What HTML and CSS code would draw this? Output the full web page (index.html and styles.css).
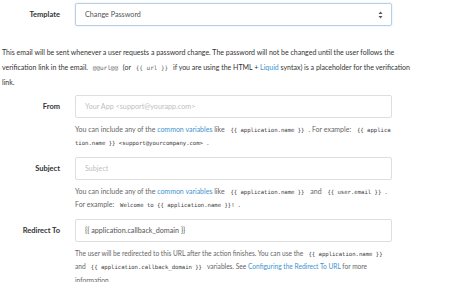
FILE: index.html
```html
<!DOCTYPE html>
<html>
<head>
<meta charset="utf-8">
<link rel="stylesheet" href="styles.css">
</head>
<body>
<div class="page">
  <div class="row row-template">
    <label class="label">Template</label>
    <div class="field">
      <div class="select">
        <span class="select-text">Change Password</span>
        <svg class="select-arrows" width="5" height="8" viewBox="0 0 5 8"><path d="M0.5 3 L2.5 0.5 L4.5 3 Z M0.5 5 L2.5 7.5 L4.5 5 Z" fill="#555"/></svg>
      </div>
    </div>
  </div>

  <p class="intro">This email will be sent whenever a user requests a password change. The password will not be changed until the user follows the verification link in the email. <code class="plain">@@url@@</code> (or <code class="plain">{{ url }}</code> if you are using the HTML + <a class="link">Liquid</a> syntax) is a placeholder for the verification link.</p>

  <div class="row row-from">
    <label class="label">From</label>
    <div class="field">
      <div class="input placeholder">Your App &lt;support@yourapp.com&gt;</div>
      <p class="help">You can include any of the <a class="link">common variables</a> like <code>{{ application.name }}</code>. For example: <code>{{ application.name }} &lt;support@yourcompany.com&gt;</code>.</p>
    </div>
  </div>

  <div class="row row-subject">
    <label class="label">Subject</label>
    <div class="field">
      <div class="input placeholder">Subject</div>
      <p class="help">You can include any of the <a class="link">common variables</a> like <code>{{ application.name }}</code> and <code>{{ user.email }}</code>. For example: <code>Welcome to {{ application.name }}!</code>.</p>
    </div>
  </div>

  <div class="row row-redirect">
    <label class="label">Redirect To</label>
    <div class="field">
      <div class="input value">{{ application.callback_domain }}</div>
      <p class="help help-compact">The user will be redirected to this URL after the action finishes. You can use the <code>{{ application.name }}</code> and <code>{{ application.callback_domain }}</code> variables. See <a class="link">Configuring the Redirect To URL</a> for more information.</p>
    </div>
  </div>
</div>
</body>
</html>
```

FILE: styles.css
```css
html, body {
  margin: 0;
  padding: 0;
  background: #ffffff;
}
body {
  font-family: "Lato", "Liberation Sans", sans-serif;
  color: #333;
  overflow: hidden;
}
.page {
  width: 432px;
  padding: 3px 0 0 2px;
}
.row {
  display: grid;
  grid-template-columns: 58px 317px;
  column-gap: 15px;
  align-items: start;
}
.label {
  text-align: right;
  font-size: 7.5px;
  font-weight: 700;
  color: #333;
  line-height: 23px;
}
.select, .input {
  box-sizing: border-box;
  height: 23px;
  border: 1px solid #dedede;
  border-radius: 2px;
  font-size: 7.2px;
  display: flex;
  align-items: center;
  padding: 0 9px;
}
.select {
  border-color: #b9cfe6;
  box-shadow: 0 0 2px rgba(120, 160, 210, 0.35);
  justify-content: space-between;
  color: #555;
}
.select-arrows {
  margin-right: -1px;
}
.placeholder {
  color: #c0c0c0;
}
.value {
  color: #555;
}
.intro {
  width: 420px;
  margin: 19px 0 0 0;
  font-size: 7px;
  line-height: 15px;
  color: #333;
}
.help {
  margin: 4.5px 0 0 0;
  font-size: 7px;
  line-height: 13.5px;
  color: #666;
}
.help-compact {
  font-size: 6.6px;
}
code {
  font-family: "DejaVu Sans Mono", "Liberation Mono", monospace;
  font-size: 5.6px;
  line-height: 1;
  color: #3a3a3a;
  padding: 0 4px;
  word-break: break-all;
}
.help-compact code {
  padding: 0 3.5px;
}
code.plain {
  font-size: 6px;
  padding: 0 3px;
  color: #666;
}
.link {
  color: #3d93d1;
  text-decoration: none;
}
.row-from {
  margin-top: 5px;
}
.row-subject,
.row-redirect {
  margin-top: 7.5px;
}
```
